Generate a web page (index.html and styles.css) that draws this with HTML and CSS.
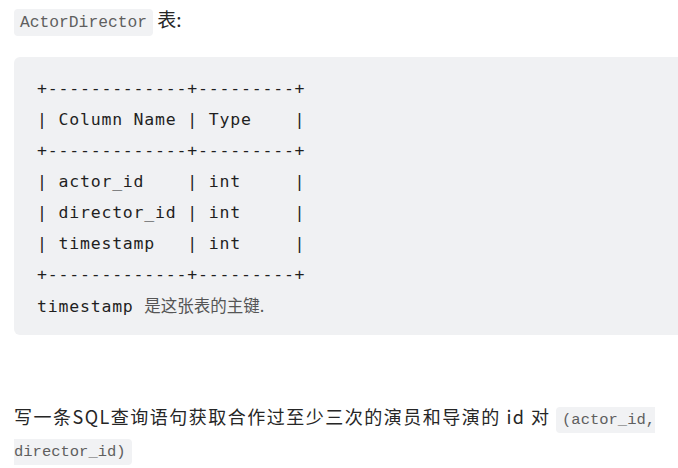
FILE: index.html
```html
<!DOCTYPE html>
<html lang="zh">
<head>
<meta charset="utf-8">
<link rel="stylesheet" href="styles.css">
</head>
<body>
<div class="content">
<p class="lead"><code class="ic ic-lg">ActorDirector</code> 表:</p>
<pre class="block">+-------------+---------+
| Column Name | Type    |
+-------------+---------+
| actor_id    | int     |
| director_id | int     |
| timestamp   | int     |
+-------------+---------+
timestamp <span class="cn">是这张表的主键.</span></pre>
<p class="desc">写一条SQL查询语句获取合作过至少三次的演员和导演的 id 对 <code class="ic">(actor_id, director_id)</code></p>
</div>
</body>
</html>
```
FILE: styles.css
```css
html, body {
  margin: 0;
  padding: 0;
  background: #ffffff;
}
.content {
  padding: 0 0 0 14px;
  font-family: "Noto Sans CJK SC", "Noto Sans", sans-serif;
  color: #262626;
}
.lead {
  margin: 6px 0 0 0;
  font-size: 19px;
  line-height: 26px;
}
.ic {
  font-family: "Liberation Mono", monospace;
  background: #f1f2f4;
  color: #5f5f5f;
  border-radius: 4px;
  padding: 4px 6px;
  font-size: 15.5px;
  letter-spacing: 0;
}
.ic-lg {
  font-size: 16.3px;
  padding: 4px 6px;
}
.block {
  margin: 21px 0 0 0;
  background: #f0f1f3;
  border-radius: 6px 0 0 6px;
  padding: 16px 22px 13px 23px;
  font-family: "DejaVu Sans Mono", monospace;
  font-size: 16.5px;
  letter-spacing: 0.8px;
  line-height: 31px;
  color: #1f1f1f;
}
.cn {
  font-family: "Noto Sans CJK SC", sans-serif;
  font-size: 16.5px;
  color: #555;
  letter-spacing: 0;
}
.desc {
  margin: 67px 0 0 0;
  font-size: 18px;
  letter-spacing: 1.5px;
  line-height: 28px;
  padding-right: 20px;
}
```
